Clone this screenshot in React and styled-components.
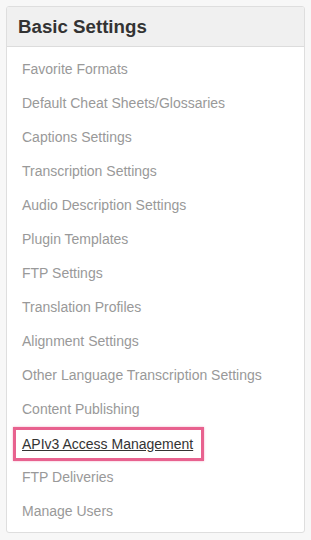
import React from 'react'
import styled, { createGlobalStyle } from 'styled-components'

const GlobalStyle = createGlobalStyle`
    body {
        margin: 0;
        background: #f7f7f7;
        font-family: "Liberation Sans", Arial, Helvetica, sans-serif;
    }
`

const Page = styled.div`
    padding: 6px 6px 8px 6px;
    width: 311px;
    height: 540px;
    box-sizing: border-box;
`

const Panel = styled.div`
    background: #fff;
    border: 1px solid #dedede;
    border-radius: 3px;
    overflow: hidden;
`

const Header = styled.div`
    height: 39px;
    background: #f0f0f0;
    border-bottom: 1px solid #dcdcdc;
    display: flex;
    align-items: center;
    padding-left: 11px;
`

const Title = styled.h2`
    margin: 0;
    font-size: 18.7px;
    font-weight: bold;
    color: #333;
`

const List = styled.ul`
    list-style: none;
    margin: 0;
    padding: 5px 0 4px 0;
`

const Item = styled.li`
    height: 34px;
    display: flex;
    align-items: center;
    padding-left: ${p => (p.active ? '6px' : '15px')};
`

const ItemLink = styled.a`
    font-size: 14px;
    color: ${p => (p.active ? '#333' : '#999')};
    text-decoration: ${p => (p.active ? 'underline' : 'none')};
    cursor: pointer;
    ${p => p.active && `
        border: 3px solid #e8628f;
        padding: 6px 8px 6px 6px;
        margin-top: 1px;
        box-shadow: 0 0 2px rgba(232, 98, 143, 0.5);
    `}
`

const items = [
    'Favorite Formats',
    'Default Cheat Sheets/Glossaries',
    'Captions Settings',
    'Transcription Settings',
    'Audio Description Settings',
    'Plugin Templates',
    'FTP Settings',
    'Translation Profiles',
    'Alignment Settings',
    'Other Language Transcription Settings',
    'Content Publishing',
    'APIv3 Access Management',
    'FTP Deliveries',
    'Manage Users',
]

export default function App() {
    return (
        <Page>
            <GlobalStyle />
            <Panel>
                <Header>
                    <Title>Basic Settings</Title>
                </Header>
                <List>
                    {items.map(name => {
                        const active = name === 'APIv3 Access Management'
                        return (
                            <Item key={name} active={active}>
                                <ItemLink active={active}>{name}</ItemLink>
                            </Item>
                        )
                    })}
                </List>
            </Panel>
        </Page>
    )
}
